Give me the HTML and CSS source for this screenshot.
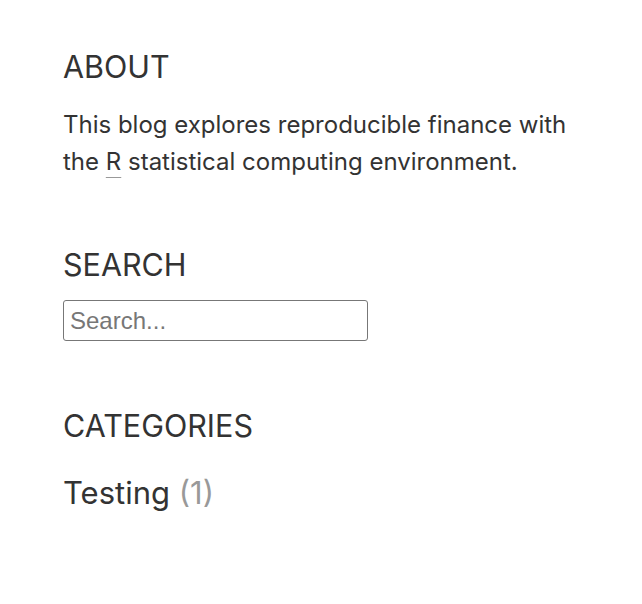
FILE: index.html
```html
<!DOCTYPE html>
<html lang="en">

<head>
    <meta charset="UTF-8">
    <title>Sidebar</title>
    <link rel="stylesheet" href="styles.css">
</head>

<body>
    <aside class="sidebar">
        <section class="widget">
            <h4>About</h4>
            <p>This blog explores reproducible finance with the <abbr title="R">R</abbr> statistical computing environment.</p>
        </section>

        <section class="widget">
            <h4>Search</h4>
            <form class="search">
                <input type="search" placeholder="Search...">
            </form>
        </section>

        <section class="widget">
            <h4>Categories</h4>
            <ul class="cats">
                <li><a href="#">Testing</a> <span class="count">(1)</span></li>
            </ul>
        </section>
    </aside>
</body>

</html>
```
FILE: styles.css
```css
html {
    background: #fff;
}
body {
    margin: 0;
    font-family: Inter, "Noto Sans", sans-serif;
    color: #333;
}
.sidebar {
    padding: 49px 59px 0 63px;
}
.widget {
    margin-bottom: 67px;
}
.widget h4 {
    font-size: 30.5px;
    font-weight: 400;
    text-transform: uppercase;
    margin: 0 0 12px;
    line-height: 36px;
}
.widget p {
    font-size: 24px;
    line-height: 37px;
    margin: 21px 0 0;
}
abbr {
    text-decoration: underline;
    text-decoration-color: #999;
    text-decoration-thickness: 1px;
    text-underline-offset: 7px;
}
.search input {
    display: block;
    width: 305px;
    height: 41px;
    box-sizing: border-box;
    margin-top: 17px;
    border: 1px solid #777;
    border-radius: 3px;
    padding: 2px 6px;
    font-family: "Liberation Sans", Arial, sans-serif;
    font-size: 24px;
}
.search input::placeholder {
    color: #777;
}
.cats {
    list-style: none;
    margin: 30px 0 0;
    padding: 0;
    font-size: 31px;
}
.cats a {
    color: #333;
    text-decoration: none;
}
.count {
    color: #999;
}
```
